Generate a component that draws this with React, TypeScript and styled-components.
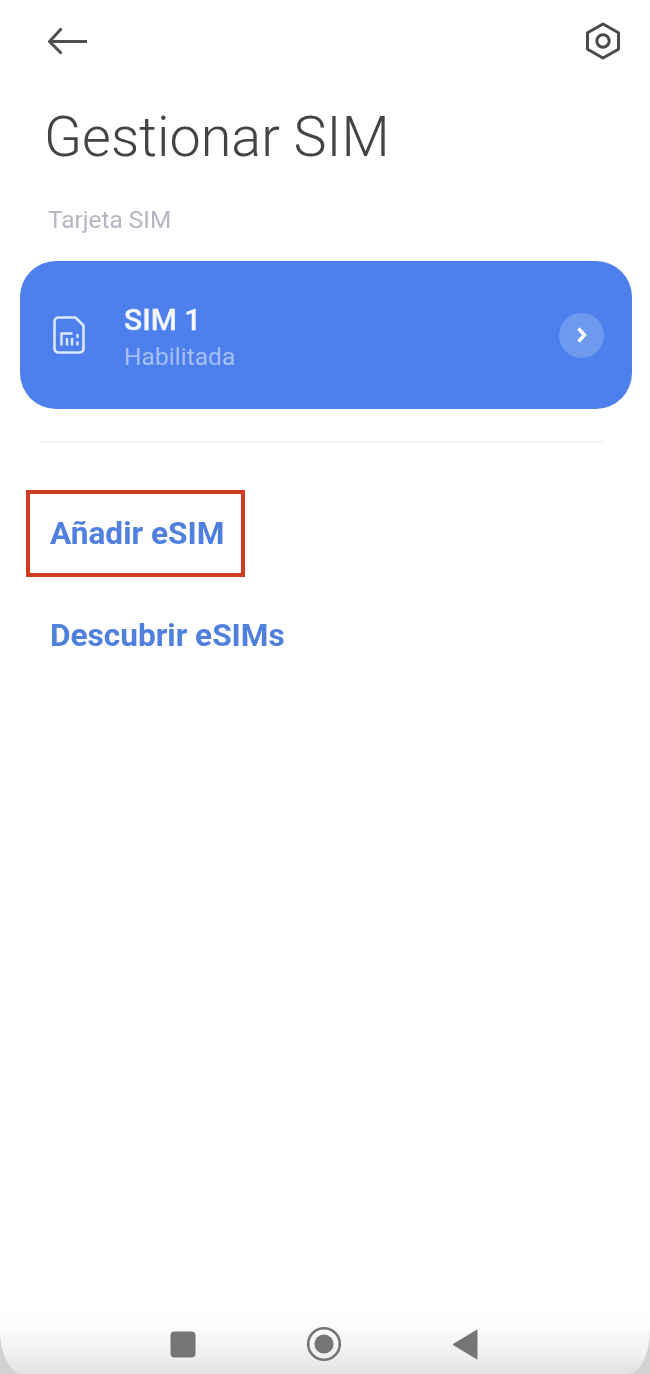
import React from "react";
import styled, { createGlobalStyle, css } from "styled-components";

const GlobalStyle = createGlobalStyle`
  html, body {
    margin: 0;
    padding: 0;
    background: #fff;
  }
  * {
    box-sizing: border-box;
  }
`;

// the reference is a soft video frame, only the red box on top of it is sharp
const soft = css`
  filter: blur(0.6px);
`;

const BackIcon = () => (
  <svg width="42" height="30" viewBox="0 0 42 30" fill="none">
    <path
      d="M40 15.5H3M14.5 2.5L2.5 15.5L14.5 27.5"
      stroke="#505050"
      strokeWidth="3"
      strokeLinejoin="round"
    />
  </svg>
);

const SettingsIcon = () => (
  <svg width="38" height="38" viewBox="0 0 38 38" fill="none">
    <path
      d="M19 2L34.5 10.7V27.3L19 36L3.5 27.3V10.7Z"
      stroke="#4a4a4a"
      strokeWidth="3"
      strokeLinejoin="round"
    />
    <circle cx="19" cy="19" r="6.2" stroke="#4a4a4a" strokeWidth="3" />
  </svg>
);

const SimIcon = () => (
  <svg width="32" height="38" viewBox="0 0 32 38" fill="none">
    <path
      d="M5.5 1.5H22.5L30.5 9.5V32.5C30.5 34.7 29 36.5 26.5 36.5H5.5C3 36.5 1.5 34.7 1.5 32.5V5.5C1.5 3 3 1.5 5.5 1.5Z"
      stroke="#dbe7fd"
      strokeWidth="2.6"
      strokeLinejoin="round"
    />
    <path
      d="M8.5 29.5V17.5H19.5M19 22V29.5M14 22V29.5M24.5 18V22M24.5 25.5V29.5"
      stroke="#dbe7fd"
      strokeWidth="2.4"
    />
  </svg>
);

const ChevronIcon = () => (
  <svg width="12" height="18" viewBox="0 0 12 18" fill="none">
    <path d="M2.5 2.5L8.5 9L2.5 15.5" stroke="#fff" strokeWidth="3.4" />
  </svg>
);

const RecentIcon = () => (
  <svg width="26" height="27" viewBox="0 0 26 27">
    <rect x="0.5" y="0.5" width="25" height="26" rx="4" fill="#757575" />
  </svg>
);

const HomeIcon = () => (
  <svg width="36" height="36" viewBox="0 0 36 36" fill="none">
    <circle cx="18" cy="18" r="15.8" stroke="#757575" strokeWidth="2.6" />
    <circle cx="18" cy="18" r="9.6" fill="#757575" />
  </svg>
);

const NavBackIcon = () => (
  <svg width="26" height="31" viewBox="0 0 26 31">
    <path d="M25 1V30L1 15.5Z" fill="#757575" stroke="#757575" strokeLinejoin="round" />
  </svg>
);

const App = () => (
  <>
    <GlobalStyle />
    <Screen>
      <TopBar>
        <BackIcon />
        <SettingsIcon />
      </TopBar>
      <Title>Gestionar SIM</Title>
      <SectionLabel>Tarjeta SIM</SectionLabel>
      <SimCard>
        <SimIcon />
        <SimInfo>
          <SimName>SIM 1</SimName>
          <SimStatus>Habilitada</SimStatus>
        </SimInfo>
        <ChevronBadge>
          <ChevronIcon />
        </ChevronBadge>
      </SimCard>
      <Divider />
      <Actions>
        <ActionRow $highlighted>
          <ActionLink>Añadir eSIM</ActionLink>
        </ActionRow>
        <ActionRow>
          <ActionLink>Descubrir eSIMs</ActionLink>
        </ActionRow>
      </Actions>
      <NavBar>
        <NavInner>
          <RecentIcon />
          <HomeIcon />
          <NavBackIcon />
        </NavInner>
      </NavBar>
    </Screen>
  </>
);

export default App;

const Screen = styled.div`
  width: 650px;
  height: 1374px;
  display: flex;
  flex-direction: column;
  overflow: hidden;
  background: #fff;
  font-family: Roboto, "Liberation Sans", sans-serif;
`;

const TopBar = styled.div`
  ${soft}
  display: flex;
  justify-content: space-between;
  align-items: center;
  height: 38px;
  margin-top: 22px;
  padding: 0 28px 0 47px;
`;

const Title = styled.h1`
  ${soft}
  margin: 40px 0 0 44px;
  font-size: 55.7px;
  line-height: 74px;
  font-weight: 300;
  color: #444;
`;

const SectionLabel = styled.div`
  ${soft}
  margin: 31px 0 0 48px;
  font-size: 24.4px;
  line-height: 30px;
  font-weight: 400;
  color: #b4b6c4;
`;

const SimCard = styled.div`
  ${soft}
  display: flex;
  align-items: center;
  width: 612px;
  height: 148px;
  margin: 26px 0 0 20px;
  padding: 0 28px 0 33px;
  border-radius: 36px;
  background: #4d80ec;
`;

const SimInfo = styled.div`
  flex: 1;
  display: flex;
  flex-direction: column;
  gap: 6px;
  margin-left: 39px;
  margin-top: 6px;
`;

const SimName = styled.div`
  font-size: 30px;
  line-height: 32px;
  font-weight: 500;
  -webkit-text-stroke: 0.3px #f4f7fe;
  color: #f4f7fe;
`;

const SimStatus = styled.div`
  font-size: 24.6px;
  line-height: 30px;
  color: #a5c0f6;
`;

const ChevronBadge = styled.div`
  display: flex;
  align-items: center;
  justify-content: center;
  width: 45px;
  height: 45px;
  border-radius: 50%;
  background: #6f98ef;
`;

const Divider = styled.div`
  ${soft}
  width: 563px;
  height: 2px;
  margin: 32px 0 0 40px;
  background: #f3f3f5;
`;

const Actions = styled.div`
  display: flex;
  flex-direction: column;
  gap: 15px;
  margin: 47px 0 0 26px;
`;

const ActionRow = styled.div<{ $highlighted?: boolean }>`
  display: flex;
  align-items: center;
  width: 219px;
  height: 87px;
  padding-left: 20px;
  white-space: nowrap;
  border: 4px solid ${(p) => (p.$highlighted ? "#d03c22" : "transparent")};
`;

const ActionLink = styled.span`
  ${soft}
  font-size: 31.6px;
  line-height: 36px;
  font-weight: 700;
  color: #4f80de;
`;

const NavBar = styled.div`
  margin-top: auto;
  height: 64px;
  background: #d2d2d2;
`;

const NavInner = styled.div`
  height: 100%;
  display: flex;
  align-items: center;
  justify-content: center;
  gap: 110px;
  padding: 4px 2px 0 0;
  border-radius: 0 0 22px 22px / 0 0 44px 44px;
  background: linear-gradient(#ffffff 0%, #fbfbfb 30%, #f0f0f0 70%, #e2e2e2 100%);

  svg {
    ${soft}
  }
`;
